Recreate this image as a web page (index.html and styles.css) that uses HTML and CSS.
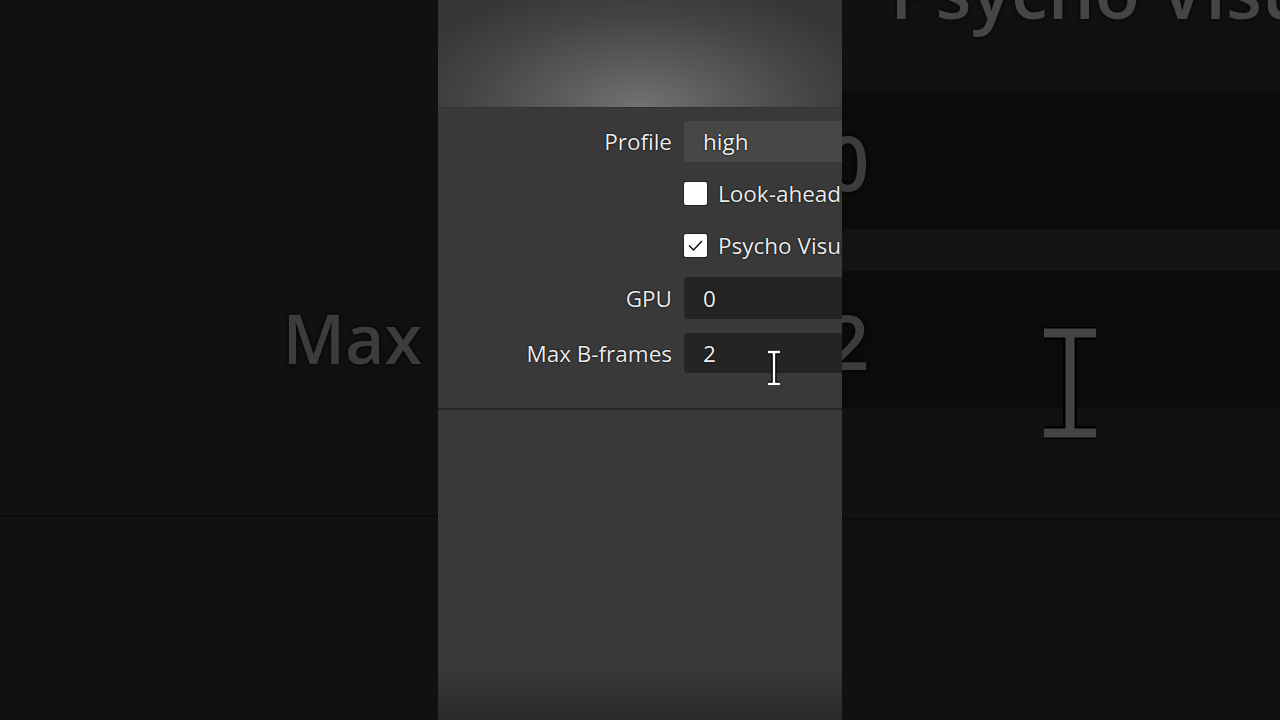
FILE: index.html
```html
<!DOCTYPE html>
<html lang="en">
<head>
    <meta charset="UTF-8">
    <meta name="viewport" content="width=device-width, initial-scale=1.0">
    <title>Encoder Settings</title>
    <link rel="stylesheet" href="styles.css">
</head>
<body>
    <div class="stage">
        <!-- blurred backdrop, left -->
        <div class="backdrop backdrop-left">
            <div class="ghost-top">
                <span class="ghost-text">Max</span>
            </div>
        </div>

        <!-- the actual settings panel -->
        <div class="panel">
            <div class="glow"></div>
            <div class="settings">
                <label class="label" for="profile">Profile</label>
                <div class="field field-select" id="profile">high</div>

                <span></span>
                <div class="check-row">
                    <span class="checkbox"></span>
                    <span class="check-label">Look-ahead</span>
                </div>

                <span></span>
                <div class="check-row">
                    <span class="checkbox">
                        <svg width="23" height="23" viewBox="0 0 23 23">
                            <polyline points="5,11.5 9.5,16 18,7" fill="none" stroke="#111" stroke-width="1.5"/>
                        </svg>
                    </span>
                    <span class="check-label">Psycho Visual Tuning</span>
                </div>

                <label class="label" for="gpu">GPU</label>
                <div class="field field-input" id="gpu">0</div>

                <label class="label label-last" for="bframes">Max B-frames</label>
                <div class="field field-input field-last" id="bframes">
                    2
                    <svg class="ibeam" width="20" height="36" viewBox="0 0 20 36">
                        <path d="M4 2h12M10 2v32M4 34h12" fill="none" stroke="#000" stroke-width="5"/>
                        <path d="M4 2h12M10 2v32M4 34h12" fill="none" stroke="#fff" stroke-width="2.4"/>
                    </svg>
                </div>
            </div>
            <div class="divider"></div>
            <div class="panel-bottom"></div>
        </div>

        <!-- blurred backdrop, right -->
        <div class="backdrop backdrop-right">
            <div class="ghost-title">
                <span class="ghost-text">Psycho Visual</span>
            </div>
            <div class="ghost-field">
                <span class="ghost-text ghost-value">0</span>
            </div>
            <div class="ghost-gap"></div>
            <div class="ghost-field">
                <span class="ghost-text ghost-value">2</span>
                <svg class="ghost-ibeam" width="60" height="112" viewBox="0 0 60 112">
                    <path d="M4 6h52M30 6v100M4 106h52" fill="none" stroke="#000" stroke-width="14"/>
                    <path d="M4 6h52M30 6v100M4 106h52" fill="none" stroke="#444" stroke-width="9"/>
                </svg>
            </div>
            <div class="ghost-rest"></div>
        </div>
    </div>
</body>
</html>
```

FILE: styles.css
```css
body {
    margin: 0;
    padding: 0;
    background-color: #111;
    font-family: "Open Sans", "Noto Sans", sans-serif;
    overflow: hidden;
}
.stage {
    display: flex;
    width: 1280px;
    height: 720px;
}

/* side backdrops */
.backdrop {
    width: 438px;
    height: 720px;
    background-color: #111;
    overflow: hidden;
    display: flex;
    flex-direction: column;
}
.ghost-text {
    color: #3c3c3c;
    font-size: 76px;
    font-weight: 600;
    line-height: 1;
    text-shadow: 0 0 4px #000;
    white-space: nowrap;
}
.ghost-top {
    height: 517px;
    border-bottom: 2px solid #0b0b0b;
    text-align: right;
    padding: 304px 16px 0 0;
    box-sizing: border-box;
}
.ghost-top .ghost-text {
    font-size: 68px;
}
.ghost-title {
    height: 92px;
    padding-left: 48px;
}
.ghost-title .ghost-text {
    display: block;
    margin-top: -46px;
    font-size: 74px;
    color: #454545;
}
.ghost-field {
    position: relative;
    height: 137px;
    background-color: #0b0b0b;
    box-sizing: border-box;
    padding-top: 32px;
}
.ghost-value {
    display: block;
    margin-left: -16px;
}
.ghost-ibeam {
    position: absolute;
    left: 198px;
    top: 56px;
}
.ghost-gap {
    height: 42px;
    background-color: #131313;
}
.ghost-rest {
    height: 110px;
    border-bottom: 2px solid #0b0b0b;
}

/* center panel */
.panel {
    width: 404px;
    height: 720px;
    background-color: #393939;
    overflow: hidden;
    display: flex;
    flex-direction: column;
}
.glow {
    height: 107px;
    flex-shrink: 0;
    background: radial-gradient(ellipse 62% 120% at 50% 100%, #727272 0%, #5a5a5a 35%, #444 70%, #363636 100%);
    border-bottom: 1px solid #333;
}
.settings {
    display: grid;
    grid-template-columns: 234px 220px;
    grid-template-rows: 41px 41px 41px 42px 43px;
    column-gap: 12px;
    row-gap: 11px;
    padding-top: 13px;
}
.label {
    display: flex;
    align-items: center;
    justify-content: flex-end;
    color: #ededed;
    font-size: 22.5px;
    text-shadow: 0 0 2px #000, 0 0 1px #000;
    white-space: nowrap;
}
.label-last,
.field-last {
    margin-top: 3px;
}
.field {
    display: flex;
    align-items: center;
    padding-left: 19px;
    border-radius: 4px;
    color: #f0f0f0;
    font-size: 22.5px;
    text-shadow: 0 0 2px #000, 0 0 1px #000;
}
.field-select {
    background-color: #474747;
}
.field-input {
    position: relative;
    background-color: #242424;
}
.ibeam {
    position: absolute;
    left: 80px;
    top: 17px;
}
.check-row {
    display: flex;
    align-items: center;
    gap: 11px;
    white-space: nowrap;
}
.checkbox {
    width: 23px;
    height: 23px;
    flex-shrink: 0;
    background-color: #fff;
    border-radius: 2px;
    box-shadow: 0 0 0 1px #222;
}
.check-label {
    color: #ededed;
    font-size: 22.5px;
    text-shadow: 0 0 2px #000, 0 0 1px #000;
}
.divider {
    height: 2px;
    margin-top: 35px;
    background-color: #262626;
    flex-shrink: 0;
}
.panel-bottom {
    flex: 1;
    background: linear-gradient(to bottom, #393939 0%, #393939 82%, #2a2a2a 100%);
}
```
